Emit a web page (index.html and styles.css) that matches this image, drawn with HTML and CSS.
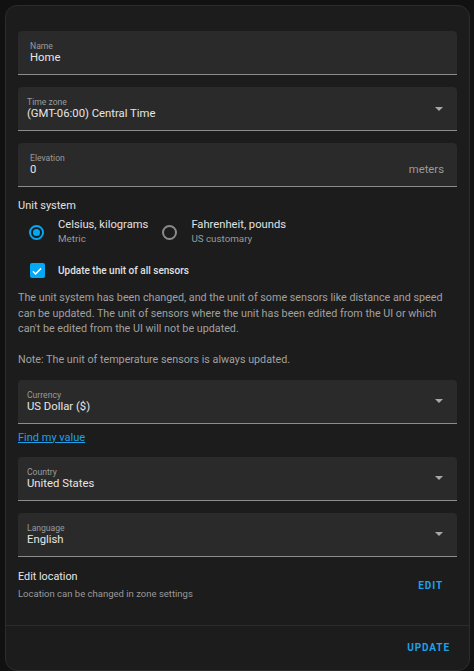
FILE: index.html
```html
<!DOCTYPE html>
<html>
<head>
<meta charset="utf-8">
<link rel="stylesheet" href="styles.css">
</head>
<body>
<div class="card">
  <div class="card-content">
    <div class="field">
      <div class="field-body">
        <div class="field-label">Name</div>
        <div class="field-value">Home</div>
      </div>
    </div>
    <div class="field select">
      <div class="field-body">
        <div class="field-label">Time zone</div>
        <div class="field-value">(GMT-06:00) Central Time</div>
      </div>
      <span class="arrow"></span>
    </div>
    <div class="field">
      <div class="field-body">
        <div class="field-label">Elevation</div>
        <div class="field-value row"><span>0</span><span class="suffix">meters</span></div>
      </div>
    </div>

    <div class="section-title">Unit system</div>
    <div class="radio-row">
      <div class="option">
        <span class="radio-wrap"><span class="radio checked"></span></span>
        <div class="option-text">
          <div class="option-main">Celsius, kilograms</div>
          <div class="option-sub">Metric</div>
        </div>
      </div>
      <div class="option">
        <span class="radio-wrap"><span class="radio"></span></span>
        <div class="option-text">
          <div class="option-main">Fahrenheit, pounds</div>
          <div class="option-sub">US customary</div>
        </div>
      </div>
    </div>
    <div class="check-row">
      <span class="check-wrap">
        <span class="checkbox">
          <svg viewBox="0 0 24 24" width="14" height="14"><path d="M5 12.5l4.5 4.5L19 7.5" fill="none" stroke="#fff" stroke-width="2.6"/></svg>
        </span>
      </span>
      <span class="check-label">Update the unit of all sensors</span>
    </div>
    <p class="info">The unit system has been changed, and the unit of some sensors like distance and speed can be updated. The unit of sensors where the unit has been edited from the UI or which can't be edited from the UI will not be updated.<br><br>Note: The unit of temperature sensors is always updated.</p>

    <div class="field select">
      <div class="field-body">
        <div class="field-label">Currency</div>
        <div class="field-value">US Dollar ($)</div>
      </div>
      <span class="arrow"></span>
    </div>
    <a class="link" href="#">Find my value</a>

    <div class="field select country">
      <div class="field-body">
        <div class="field-label">Country</div>
        <div class="field-value">United States</div>
      </div>
      <span class="arrow"></span>
    </div>
    <div class="field select">
      <div class="field-body">
        <div class="field-label">Language</div>
        <div class="field-value">English</div>
      </div>
      <span class="arrow"></span>
    </div>

    <div class="location-row">
      <div>
        <div class="loc-title">Edit location</div>
        <div class="loc-sub">Location can be changed in zone settings</div>
      </div>
      <span class="text-btn edit">EDIT</span>
    </div>
  </div>
  <div class="card-actions">
    <span class="text-btn">UPDATE</span>
  </div>
</div>
</body>
</html>
```

FILE: styles.css
```css
html, body {
  margin: 0;
  padding: 0;
  background: #111111;
  height: 671px;
  overflow: hidden;
  font-family: Roboto, "Noto Sans", sans-serif;
  color: #e1e1e1;
}

.card {
  margin: 5px 4px 0 5px;
  background: #1c1c1c;
  border: 1px solid #2c2c2c;
  border-radius: 12px;
}

.card-content {
  padding: 25px 12px 24px 12px;
}

.field {
  box-sizing: border-box;
  height: 44px;
  background: #2a2a2a;
  border-bottom: 1px solid #8c8c8c;
  border-radius: 4px 4px 0 0;
  padding: 10px 13px 0 12px;
  margin-bottom: 12px;
  display: flex;
  align-items: flex-start;
}

.field.select {
  padding-left: 9px;
  padding-right: 14px;
}

.field-body {
  flex: 1;
}

.field-label {
  font-size: 8.6px;
  line-height: 10px;
  color: #9a9a9a;
}

.field-value {
  font-size: 11.3px;
  line-height: 14px;
  color: #e6e6e6;
}

.field-value.row {
  display: flex;
  justify-content: space-between;
}

.suffix {
  color: #9a9a9a;
}

.arrow {
  align-self: center;
  margin-top: -10px;
  width: 0;
  height: 0;
  border-left: 4px solid transparent;
  border-right: 4px solid transparent;
  border-top: 4px solid #a8a8a8;
}

.section-title {
  margin-top: -1px;
  font-size: 11px;
  line-height: 16px;
  color: #e1e1e1;
}

.radio-row {
  display: flex;
  margin-top: 4px;
  gap: 3px;
}

.option {
  display: flex;
  align-items: center;
  gap: 4px;
}

.radio-wrap {
  width: 36px;
  display: flex;
  justify-content: center;
  margin-top: 1px;
}

.radio {
  box-sizing: border-box;
  width: 15px;
  height: 15px;
  border-radius: 50%;
  border: 2px solid #8a8a8a;
  display: flex;
  align-items: center;
  justify-content: center;
}

.radio.checked {
  border-color: #03a9f4;
}

.radio.checked::after {
  content: "";
  width: 7px;
  height: 7px;
  border-radius: 50%;
  background: #03a9f4;
}

.option-main {
  font-size: 11.2px;
  line-height: 14px;
  color: #e1e1e1;
}

.option-sub {
  font-size: 9.8px;
  line-height: 13px;
  color: #9a9a9a;
}

.check-row {
  display: flex;
  align-items: center;
  gap: 4px;
  margin-top: 18px;
  height: 15px;
}

.check-wrap {
  width: 36px;
  display: flex;
  justify-content: center;
  margin-left: 1px;
  margin-right: -1px;
}

.checkbox {
  width: 15px;
  height: 15px;
  border-radius: 2px;
  background: #03a9f4;
  display: flex;
  align-items: center;
  justify-content: center;
}

.check-label {
  font-size: 10px;
  line-height: 14px;
  font-weight: 500;
  color: #e1e1e1;
}

.info {
  margin: 12px 0 12px 0;
  font-size: 10.75px;
  line-height: 15.5px;
  color: #a0a0a0;
}

.link {
  display: block;
  margin-top: -6px;
  font-size: 11px;
  line-height: 15px;
  color: #1ea1e8;
  text-decoration: underline;
}

.field.country {
  margin-top: 12px;
}

.location-row {
  display: flex;
  align-items: center;
  justify-content: space-between;
  margin-top: 0;
}

.loc-title {
  font-size: 10.8px;
  line-height: 16px;
  color: #e6e6e6;
}

.loc-sub {
  margin-top: 2px;
  font-size: 9.5px;
  line-height: 14px;
  color: #9a9a9a;
}

.text-btn {
  font-size: 10px;
  font-weight: 700;
  letter-spacing: 0.9px;
  color: #1ea1e8;
}

.text-btn.edit {
  margin-right: 14px;
  margin-top: 1px;
}

.card-actions {
  border-top: 1px solid #2c2c2c;
  height: 44px;
  display: flex;
  align-items: center;
  justify-content: flex-end;
  padding-right: 19px;
}
```
